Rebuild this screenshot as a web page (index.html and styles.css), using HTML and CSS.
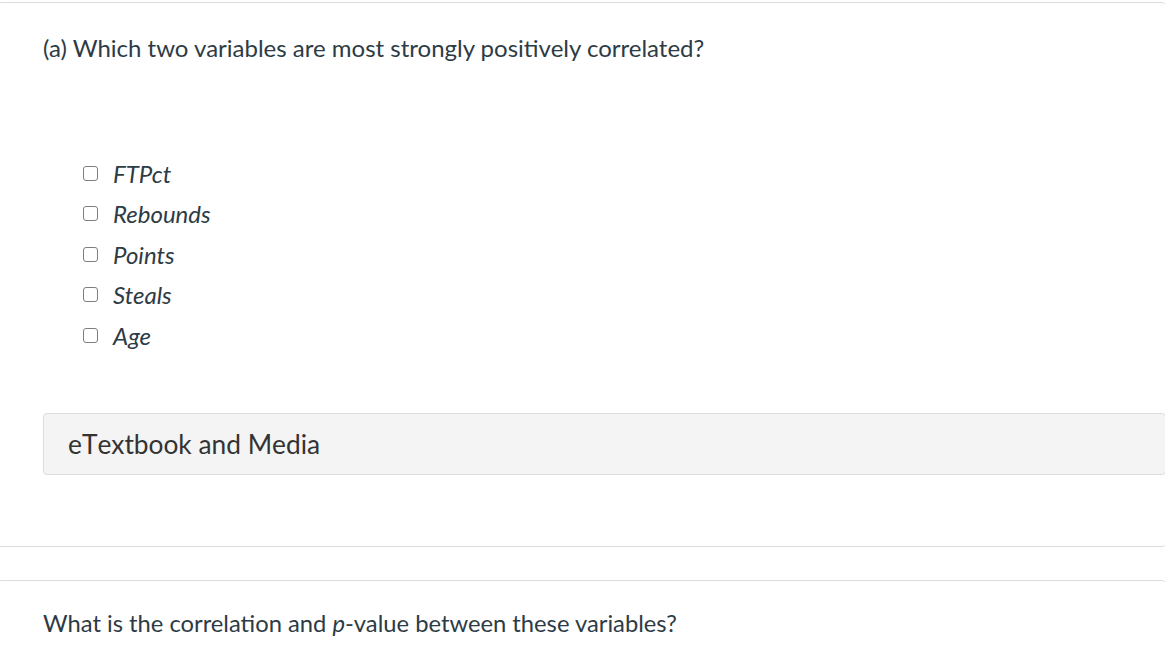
FILE: index.html
```html
<!DOCTYPE html>
<html>
<head>
<meta charset="utf-8">
<link rel="stylesheet" href="styles.css">
</head>
<body>
<div class="page">
  <section class="card card-first">
    <p class="question">(a) Which two variables are most strongly positively correlated?</p>
    <ul class="options">
      <li class="option"><span class="box"></span><span class="label">FTPct</span></li>
      <li class="option"><span class="box"></span><span class="label">Rebounds</span></li>
      <li class="option"><span class="box"></span><span class="label">Points</span></li>
      <li class="option"><span class="box"></span><span class="label">Steals</span></li>
      <li class="option"><span class="box"></span><span class="label">Age</span></li>
    </ul>
    <div class="media">eTextbook and Media</div>
  </section>
  <section class="card card-second">
    <p class="question question-small">What is the correlation and <i>p</i>-value between these variables?</p>
  </section>
</div>
</body>
</html>
```
FILE: styles.css
```css
html, body {
  margin: 0;
  padding: 0;
  background: #ffffff;
  overflow: hidden;
}
body {
  font-family: Lato, "Liberation Sans", sans-serif;
  color: #2d3b45;
}
.page {
  padding-top: 2px;
  margin-left: -3px;
  width: 1170px;
}
.card {
  border: 1px solid #dcdcdc;
  border-radius: 5px;
  background: #fff;
}
.card-first {
  padding: 30px 0 71px 45px;
}
.card-second {
  margin-top: 33px;
  padding: 27px 0 40px 45px;
}
.question {
  margin: 0;
  font-size: 24px;
  line-height: 30px;
}
.question-small {
  font-size: 23.75px;
}
.options {
  list-style: none;
  margin: 90px 0 0 0;
  padding: 0 0 0 40px;
}
.option {
  display: flex;
  align-items: center;
  height: 40.5px;
}
.box {
  width: 13px;
  height: 13px;
  border: 1px solid #7a7f84;
  border-radius: 3px;
  margin-right: 15px;
  flex: none;
}
.label {
  font-style: italic;
  font-size: 24px;
}
.media {
  margin-top: 57px;
  height: 60px;
  box-sizing: content-box;
  border: 1px solid #dcdcdc;
  border-radius: 4px;
  background: #f4f4f4;
  display: flex;
  align-items: center;
  padding-left: 24px;
  font-size: 26.3px;
  font-kerning: none;
  color: #333333;
}
```
